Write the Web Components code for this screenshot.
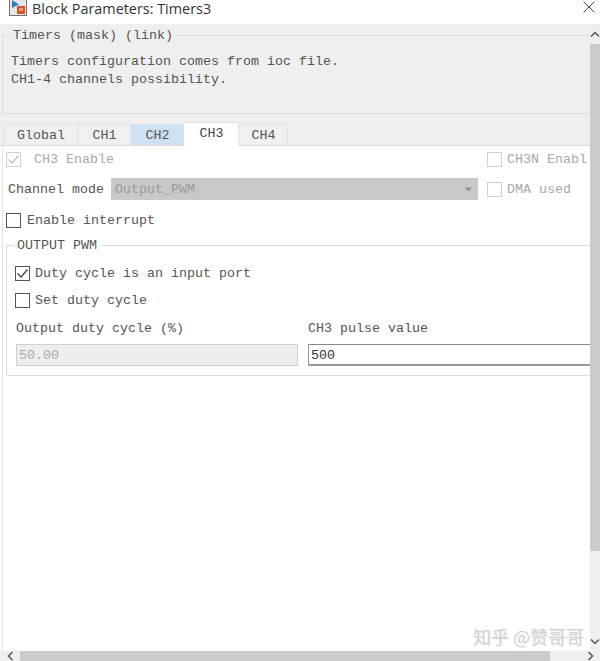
<!DOCTYPE html>
<html>
<head>
<meta charset="utf-8">
<title>Block Parameters: Timers3</title>
<style>
  html, body { margin: 0; height: 100%; background: #fff; }
  body {
    width: 600px;
    height: 661px;
    overflow: hidden;
    font: 13.33px "Liberation Mono", "Noto Sans CJK SC", monospace;
    color: #555;
  }
</style>
</head>
<body>
<dialog-window>
  <title-bar slot="title">Block Parameters: Timers3</title-bar>
  <mask-box slot="mask" legend="Timers (mask) (link)">Timers configuration comes from ioc file.<br>CH1-4 channels possibility.</mask-box>
  <tab-strip slot="tabs">
    <tab-item style="width:74px">Global</tab-item>
    <tab-item style="width:53px">CH1</tab-item>
    <tab-item style="width:53px" state="hover">CH2</tab-item>
    <tab-item style="width:55px" state="active">CH3</tab-item>
    <tab-item style="width:49px">CH4</tab-item>
  </tab-strip>
  <tab-pane slot="pane">
    <pane-row style="height:26px">
      <check-row checked disabled gap="13" style="width:481px">CH3 Enable</check-row>
      <check-row disabled gap="5">CH3N Enabl</check-row>
    </pane-row>
    <pane-row style="height:34px">
      <span class="lbl" style="width:105px;padding-left:2px;box-sizing:border-box">Channel mode</span>
      <combo-box style="width:367px">Output_PWM</combo-box>
      <check-row disabled gap="5" style="margin-left:9px">DMA used</check-row>
    </pane-row>
    <pane-row style="height:28px">
      <check-row gap="6">Enable interrupt</check-row>
    </pane-row>
    <group-box legend="OUTPUT PWM" style="margin-top:11px">
      <check-row checked gap="5" style="height:27px;margin-left:-1px">Duty cycle is an input port</check-row>
      <check-row gap="5" style="height:27px;margin-left:-1px">Set duty cycle</check-row>
      <value-fields>
        <text-field disabled label="Output duty cycle (%)" value="50.00" style="width:282px"></text-field>
        <text-field label="CH3 pulse value" value="500" style="width:300px"></text-field>
      </value-fields>
    </group-box>
  </tab-pane>
  <v-scrollbar slot="vbar"></v-scrollbar>
  <h-scrollbar slot="hbar"></h-scrollbar>
  <span slot="mark">知乎 @赞哥哥</span>
</dialog-window>

<script>
function shadow(el, html) {
  const root = el.attachShadow({ mode: "open" });
  root.innerHTML = html;
  return root;
}

class DialogWindow extends HTMLElement {
  connectedCallback() {
    if (this.shadowRoot) return;
    shadow(this, `
      <style>
        :host { display: grid; position: relative; width: 600px; height: 661px;
          grid-template-columns: 590px 10px; grid-template-rows: 24px 122px 1fr 10px; overflow: hidden; }
        .title { grid-column: 1 / 3; }
        .head { grid-column: 1; background: #efefef; display: flex; flex-direction: column; min-width: 0; }
        .pane { grid-column: 1; min-width: 0; min-height: 0; overflow: hidden; }
        .vbar { grid-column: 2; grid-row: 2 / 4; }
        .hbar { grid-column: 1 / 3; }
        .mark { position: absolute; left: 473px; top: 625px; color: #d2d2d2; font: 18px/22px "Noto Sans CJK SC", sans-serif;
          text-shadow: 1px 1px 1px #ececec; white-space: nowrap; }
      </style>
      <div class="title"><slot name="title"></slot></div>
      <div class="head"><slot name="mask"></slot><slot name="tabs"></slot></div>
      <div class="vbar"><slot name="vbar"></slot></div>
      <div class="pane"><slot name="pane"></slot></div>
      <div class="hbar"><slot name="hbar"></slot></div>
      <div class="mark"><slot name="mark"></slot></div>
    `);
  }
}

class TitleBar extends HTMLElement {
  connectedCallback() {
    if (this.shadowRoot) return;
    shadow(this, `
      <style>
        :host { display: flex; align-items: flex-start; height: 24px; background: #fff; overflow: hidden; }
        svg.icon { margin: -2px 5px 0 9px; flex: none; }
        .t { font: 14.4px/17px "Open Sans", "Liberation Sans", sans-serif; color: #333; flex: 1; white-space: nowrap; }
        svg.x { margin: 1px 5px 0 0; flex: none; }
      </style>
      <svg class="icon" width="18" height="18" viewBox="0 0 18 18">
        <rect x="0.5" y="0.5" width="17" height="17" fill="#e8e6e4" stroke="#77706c"/>
        <path d="M3 2 L10 6.5 L3 10 Z" fill="#2f7fc4"/>
        <rect x="8" y="8" width="8" height="8" fill="#d4532c"/>
        <rect x="10" y="10" width="4" height="3" fill="#ee9a70"/>
      </svg>
      <div class="t"><slot></slot></div>
      <svg class="x" width="12" height="12" viewBox="0 0 12 12"><path d="M0.5 0.5 L11.5 11.5 M11.5 0.5 L0.5 11.5" stroke="#444" stroke-width="1" fill="none"/></svg>
    `);
  }
}

class MaskBox extends HTMLElement {
  connectedCallback() {
    if (this.shadowRoot) return;
    shadow(this, `
      <style>
        :host { display: block; height: 100px; flex: none; padding-top: 11px; box-sizing: border-box; }
        .box { height: 79px; margin-left: 2px; border: 1px solid #dcdcdc; border-right: 0; box-sizing: border-box; position: relative; padding: 17px 0 0 8px; line-height: 18px; white-space: nowrap; }
        .legend { position: absolute; left: 7px; top: -9px; padding: 0 3px; background: #efefef; line-height: 18px; }
      </style>
      <div class="box"><span class="legend">${this.getAttribute("legend")}</span><slot></slot></div>
    `);
  }
}

class TabStrip extends HTMLElement {
  connectedCallback() {
    if (this.shadowRoot) return;
    shadow(this, `
      <style>
        :host { display: flex; height: 22px; padding-left: 4px; align-items: flex-end; border-bottom: 1px solid #dcdcdc; box-sizing: border-box; }
      </style>
      <slot></slot>
    `);
  }
}

class TabItem extends HTMLElement {
  connectedCallback() {
    if (this.shadowRoot) return;
    shadow(this, `
      <style>
        :host { display: flex; align-items: center; justify-content: center; box-sizing: border-box; height: 21px; padding-left: 1px;
          background: #f0f0f0; border: 1px solid #e2e2e2; border-bottom: 0; border-left-width: 0; color: #555; }
        :host(:first-child) { border-left-width: 1px; padding-left: 0; }
        :host([state="hover"]) { background: #cfe2f3; border-color: #d5e3ef; }
        :host([state="active"]) { background: #fff; height: 24px; margin-bottom: -1px; padding-bottom: 3px; border-color: #e2e2e2; position: relative; color: #444; }
      </style>
      <slot></slot>
    `);
  }
}

class TabPane extends HTMLElement {
  connectedCallback() {
    if (this.shadowRoot) return;
    shadow(this, `
      <style>
        :host { display: block; height: 100%; background: #fff; padding-left: 6px; box-sizing: border-box; position: relative; }
        .edge { position: absolute; left: 2px; top: 0; bottom: 0; width: 1px; background: #e4e4e4; }
      </style>
      <div class="edge"></div>
      <slot></slot>
    `);
  }
}

class PaneRow extends HTMLElement {
  connectedCallback() {
    if (this.shadowRoot) return;
    shadow(this, `
      <style>
        :host { display: flex; align-items: center; white-space: nowrap; overflow: hidden; }
        ::slotted(.lbl) { display: block; flex: none; }
      </style>
      <slot></slot>
    `);
  }
}

class CheckRow extends HTMLElement {
  connectedCallback() {
    if (this.shadowRoot) return;
    const disabled = this.hasAttribute("disabled");
    const checked = this.hasAttribute("checked");
    const stroke = disabled ? "#cfcfcf" : "#555";
    const tick = disabled ? "#bdbdbd" : "#444";
    const gap = this.getAttribute("gap") || "6";
    shadow(this, `
      <style>
        :host { display: flex; align-items: center; flex: none; white-space: nowrap; color: ${disabled ? "#a8a8a8" : "inherit"}; }
        svg { flex: none; margin-right: ${gap}px; }
      </style>
      <svg width="15" height="15" viewBox="0 0 15 15">
        <rect x="0.5" y="0.5" width="14" height="14" fill="#fff" stroke="${stroke}"/>
        ${checked ? `<path d="M2.5 7.5 L6 11 L12.5 3.5" fill="none" stroke="${tick}" stroke-width="1.3"/>` : ""}
      </svg>
      <slot></slot>
    `);
  }
}

class ComboBox extends HTMLElement {
  connectedCallback() {
    if (this.shadowRoot) return;
    shadow(this, `
      <style>
        :host { display: flex; align-items: center; flex: none; height: 22px; background: #c8c8c8; color: #9a9a9a; padding: 0 6px 0 4px; box-sizing: border-box; }
        span { flex: 1; }
        svg { flex: none; }
      </style>
      <span><slot></slot></span>
      <svg width="7" height="5" viewBox="0 0 7 5"><path d="M0 0.5 L7 0.5 L3.5 4.5 Z" fill="#8f8f8f"/></svg>
    `);
  }
}

class GroupBox extends HTMLElement {
  connectedCallback() {
    if (this.shadowRoot) return;
    shadow(this, `
      <style>
        :host { display: block; border: 1px solid #dcdcdc; border-right: 0; height: 131px; box-sizing: border-box; position: relative; padding: 14px 0 0 9px; }
        .legend { position: absolute; left: 7px; top: -8px; padding: 0 3px; background: #fff; line-height: 16px; }
      </style>
      <span class="legend">${this.getAttribute("legend")}</span>
      <slot></slot>
    `);
  }
}

class ValueFields extends HTMLElement {
  connectedCallback() {
    if (this.shadowRoot) return;
    shadow(this, `
      <style>
        :host { display: flex; gap: 10px; margin-top: 7px; }
      </style>
      <slot></slot>
    `);
  }
}

class TextField extends HTMLElement {
  connectedCallback() {
    if (this.shadowRoot) return;
    const disabled = this.hasAttribute("disabled");
    shadow(this, `
      <style>
        :host { display: block; flex: none; }
        label { display: block; height: 23px; line-height: 16px; white-space: nowrap; }
        .input { height: 22px; box-sizing: border-box; line-height: 21px; padding-left: 2px; overflow: hidden;
          ${disabled
            ? "background: #eee; border: 1px solid #d0d0d0; color: #a8a8a8;"
            : "background: #fff; border: 1px solid #999; border-bottom-width: 2px; border-top-color: #8a8a8a; color: #333;"}
        }
      </style>
      <label>${this.getAttribute("label")}</label>
      <div class="input">${this.getAttribute("value")}</div>
    `);
  }
}

class VScrollbar extends HTMLElement {
  connectedCallback() {
    if (this.shadowRoot) return;
    shadow(this, `
      <style>
        :host { display: flex; flex-direction: column; height: 100%; background: #efefef; }
        .btn { height: 20px; flex: none; display: flex; justify-content: center; align-items: center; overflow: hidden; }
        .thumb { height: 507px; flex: none; background: #cbcbcb; }
        .fill { flex: 1; }
      </style>
      <div class="btn"><svg width="10" height="7" viewBox="0 0 10 7"><path d="M1 5.5 L5 1.5 L9 5.5" fill="none" stroke="#555" stroke-width="1.5"/></svg></div>
      <div class="thumb"></div>
      <div class="fill"></div>
      <div class="btn"><svg width="10" height="7" viewBox="0 0 10 7"><path d="M1 1.5 L5 5.5 L9 1.5" fill="none" stroke="#555" stroke-width="1.5"/></svg></div>
    `);
  }
}

class HScrollbar extends HTMLElement {
  connectedCallback() {
    if (this.shadowRoot) return;
    shadow(this, `
      <style>
        :host { display: flex; height: 10px; background: #efefef; overflow: hidden; }
        .btn { width: 20px; flex: none; display: flex; justify-content: center; align-items: flex-start; overflow: hidden; }
        .thumb { width: 530px; flex: none; background: #cbcbcb; }
        .fill { flex: 1; }
      </style>
      <div class="btn"><svg width="7" height="10" viewBox="0 0 7 10"><path d="M5.5 1 L1.5 5 L5.5 9" fill="none" stroke="#555" stroke-width="1.5"/></svg></div>
      <div class="thumb"></div>
      <div class="fill"></div>
      <div class="btn"><svg width="7" height="10" viewBox="0 0 7 10"><path d="M1.5 1 L5.5 5 L1.5 9" fill="none" stroke="#555" stroke-width="1.5"/></svg></div>
    `);
  }
}

customElements.define("dialog-window", DialogWindow);
customElements.define("title-bar", TitleBar);
customElements.define("mask-box", MaskBox);
customElements.define("tab-strip", TabStrip);
customElements.define("tab-item", TabItem);
customElements.define("tab-pane", TabPane);
customElements.define("pane-row", PaneRow);
customElements.define("check-row", CheckRow);
customElements.define("combo-box", ComboBox);
customElements.define("group-box", GroupBox);
customElements.define("value-fields", ValueFields);
customElements.define("text-field", TextField);
customElements.define("v-scrollbar", VScrollbar);
customElements.define("h-scrollbar", HScrollbar);
</script>
</body>
</html>
